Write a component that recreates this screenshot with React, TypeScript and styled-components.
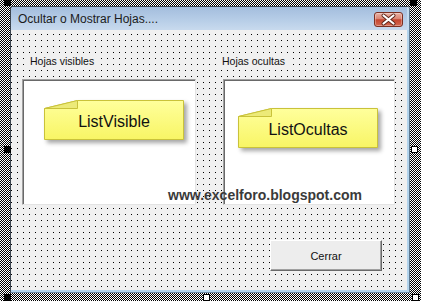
import React from 'react';
import styled, { createGlobalStyle } from 'styled-components';

const GlobalStyle = createGlobalStyle`
  html, body {
    margin: 0;
    padding: 0;
    background: #fff;
  }
  body {
    font-family: "Liberation Sans", Arial, sans-serif;
  }
`;

const App: React.FC = () => {
  return (
    <>
      <GlobalStyle />
      <Frame>
        <Window>
          <TitleBar>
            <Title>Ocultar o Mostrar Hojas....</Title>
            <CloseButton>
              <svg width="29" height="15" viewBox="0 0 29 15">
                <path d="M9.5 3.5 L19.5 11.5 M19.5 3.5 L9.5 11.5" stroke="#5a2318" strokeWidth="4" strokeLinecap="round" />
                <path d="M9.5 3.5 L19.5 11.5 M19.5 3.5 L9.5 11.5" stroke="#ffffff" strokeWidth="2.2" strokeLinecap="round" />
              </svg>
            </CloseButton>
          </TitleBar>

          <FormBody>
            <Panels>
              <Panel>
                <Caption indent={4}>Hojas visibles</Caption>
                <ListBox width={174} padTop={20} padLeft={21}>
                  <Note>
                    <NoteShape />
                    <NoteText>ListVisible</NoteText>
                  </Note>
                </ListBox>
              </Panel>
              <Panel>
                <Caption indent={-5}>Hojas ocultas</Caption>
                <ListBox width={172} padTop={28} padLeft={14}>
                  <Note>
                    <NoteShape />
                    <NoteText>ListOcultas</NoteText>
                  </Note>
                </ListBox>
              </Panel>
            </Panels>

            <ButtonRow>
              <CommandButton>Cerrar</CommandButton>
            </ButtonRow>

            <Watermark>www.excelforo.blogspot.com</Watermark>
          </FormBody>
        </Window>

        <Handle dark style={{ left: 4, top: -1 }} />
        <Handle dark style={{ left: 410, top: -1 }} />
        <Handle dark style={{ left: 4, top: 146 }} />
        <Handle style={{ left: 411, top: 146 }} />
        <Handle dark style={{ left: 4, top: 294 }} />
        <Handle style={{ left: 203, top: 294 }} />
        <Handle style={{ left: 412, top: 294 }} />
      </Frame>
    </>
  );
};

const NoteShape: React.FC = () => (
  <NoteSvg width="140" height="40" viewBox="0 0 140 40">
    <defs>
      <linearGradient id="noteFill" x1="0" y1="0" x2="0" y2="1">
        <stop offset="0" stopColor="#ffff9c" />
        <stop offset="1" stopColor="#f8f565" />
      </linearGradient>
    </defs>
    <polygon points="0.5,8.5 33.5,0.5 139.5,0.5 139.5,39.5 0.5,39.5" fill="url(#noteFill)" stroke="#c9c23a" />
    <polygon points="0.5,8.5 33.5,0.5 33.5,8.5" fill="#ecea78" stroke="#c9c23a" />
  </NoteSvg>
);

// Styled components
const Frame = styled.div`
  position: relative;
  width: 421px;
  height: 301px;
  box-sizing: border-box;
  padding: 6px 11px 8px 10px;
  overflow: hidden;
  background: repeating-conic-gradient(#000 0 25%, #fff 0 50%) 0 0 / 2px 2px;
`;

const Window = styled.div`
  width: 400px;
  height: 287px;
  box-sizing: border-box;
  display: flex;
  flex-direction: column;
  border: 1px solid #3a434d;
  border-right-color: #5d7890;
  border-bottom-color: #6f8ba4;
  border-radius: 3px 3px 0 0;
  background: #f0f0f0;
  overflow: hidden;
`;

const TitleBar = styled.div`
  height: 23px;
  flex: none;
  display: flex;
  align-items: center;
  justify-content: space-between;
  padding: 0 4px 0 7px;
  border-right: 2px solid #c4dcf0;
  background: linear-gradient(#a3bddd, #b6cde7 55%, #c8daee);
`;

const Title = styled.span`
  font-size: 12px;
  color: #1b1b1b;
  line-height: 14px;
`;

const CloseButton = styled.div`
  width: 29px;
  height: 15px;
  box-sizing: border-box;
  margin-top: 1px;
  display: flex;
  align-items: center;
  justify-content: center;
  border: 1px solid #7c3022;
  border-radius: 3px;
  background: linear-gradient(#eab2a5 0%, #da8472 45%, #c5452e 52%, #d46a52 100%);
  box-shadow: inset 0 0 0 1px rgba(255, 255, 255, 0.3);

  svg {
    margin: -1px;
  }
`;

const FormBody = styled.div`
  position: relative;
  flex: 1;
  padding: 24px 0 0 11px;
  border-right: 2px solid #b3d4ed;
  border-bottom: 2px solid #b3d4ed;
  background-color: #f0f0f0;
  background-image: conic-gradient(from 270deg at 1px 1px, #000 0 90deg, transparent 90deg 360deg);
  background-size: 6px 6px;
  background-position: 0 4px;
`;

const Panels = styled.div`
  display: flex;
  gap: 27px;
`;

const Panel = styled.div`
  display: flex;
  flex-direction: column;
`;

const Caption = styled.div<{ indent: number }>`
  align-self: flex-start;
  margin-left: ${(p) => p.indent}px;
  padding: 0 4px;
  height: 14px;
  line-height: 14px;
  font-size: 10.5px;
  color: #111;
  background: #f0f0f0;
`;

const ListBox = styled.div<{ width: number; padTop: number; padLeft: number }>`
  width: ${(p) => p.width}px;
  height: 126px;
  box-sizing: border-box;
  margin-top: 11px;
  padding: ${(p) => p.padTop}px 0 0 ${(p) => p.padLeft}px;
  background: #fff;
  border: 1px solid;
  border-color: #a0a0a0 #e3e3e3 #e3e3e3 #a0a0a0;
  box-shadow: inset 1px 1px 0 #696969;
`;

const Note = styled.div`
  position: relative;
  width: 140px;
  height: 40px;
  display: flex;
  align-items: center;
  justify-content: center;
  box-sizing: border-box;
  padding-top: 4px;
`;

const NoteSvg = styled.svg`
  position: absolute;
  left: 0;
  top: 0;
  filter: drop-shadow(3px 3px 2px rgba(0, 0, 0, 0.35));
`;

const NoteText = styled.span`
  position: relative;
  font-size: 16px;
  color: #111;
`;

const ButtonRow = styled.div`
  display: flex;
  justify-content: flex-end;
  padding-right: 25px;
  margin-top: 35px;
`;

const CommandButton = styled.div`
  width: 112px;
  height: 31px;
  box-sizing: border-box;
  display: flex;
  align-items: center;
  justify-content: center;
  font-size: 11px;
  color: #111;
  background: #ededed;
  border: 1px solid;
  border-color: #ffffff #696969 #696969 #ffffff;
  box-shadow: inset -1px -1px 0 #a0a0a0;
`;

const Watermark = styled.div`
  position: absolute;
  left: 157px;
  top: 157px;
  font-size: 14px;
  line-height: 16px;
  font-weight: bold;
  color: #3a3a3a;
  white-space: nowrap;
`;

const Handle = styled.div<{ dark?: boolean }>`
  position: absolute;
  width: 7px;
  height: 7px;
  box-sizing: border-box;
  border: 1px solid #000;
  background: ${(p) => (p.dark ? '#000' : '#fff')};
`;

export default App;
